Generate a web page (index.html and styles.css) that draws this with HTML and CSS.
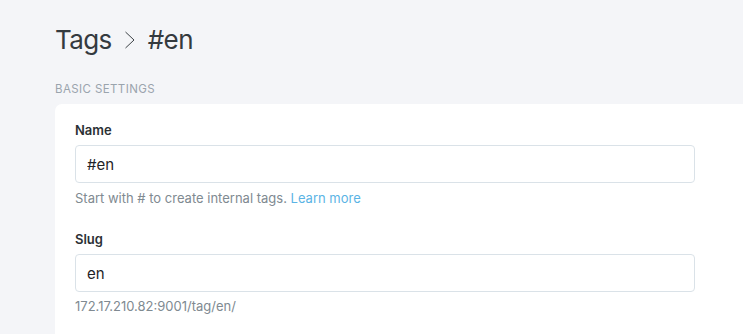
FILE: index.html
```html
<!DOCTYPE html>
<html lang="en">
<head>
    <meta charset="UTF-8">
    <title>Tags - #en</title>
    <link rel="stylesheet" href="styles.css">
</head>
<body>
    <div class="canvas">
        <h2 class="canvas-title">
            <span>Tags</span>
            <svg class="crumb-arrow" viewBox="0 0 12 18" width="12" height="18">
                <path d="M1.5 1 L10 9 L1.5 17" fill="none" stroke="#3c4246" stroke-width="1"/>
            </svg>
            <span>#en</span>
        </h2>

        <p class="section-title">Basic settings</p>

        <div class="main-settings">
            <div class="form-group">
                <label for="tag-name">Name</label>
                <input type="text" id="tag-name" value="#en">
                <p class="hint">Start with # to create internal tags. <a href="#">Learn more</a></p>
            </div>
            <div class="form-group">
                <label for="tag-slug">Slug</label>
                <input type="text" id="tag-slug" value="en">
                <p class="hint url">172.17.210.82:9001/tag/en/</p>
            </div>
        </div>
    </div>
</body>
</html>
```

FILE: styles.css
```css
html, body {
    height: 100%;
}

body {
    margin: 0;
    padding: 0;
    background-color: #f4f5f8;
    font-family: Inter, "Noto Sans", sans-serif;
    color: #15171a;
    overflow: hidden;
}

.canvas {
    display: flex;
    flex-direction: column;
    height: 100%;
    box-sizing: border-box;
    padding: 20px 0 0 55px;
}

.canvas-title {
    display: flex;
    flex-shrink: 0;
    align-items: center;
    gap: 12px;
    margin: 0;
    height: 38px;
    font-size: 26px;
    font-weight: 400;
    color: #343a3f;
    letter-spacing: -0.6px;
}

.crumb-arrow {
    margin-top: 1px;
}

.section-title {
    flex-shrink: 0;
    margin: 24px 0 8px;
    font-size: 11.5px;
    line-height: 14px;
    text-transform: uppercase;
    letter-spacing: 0.4px;
    color: #9aa4ad;
}

.main-settings {
    flex: 1;
    min-height: 0;
    overflow: hidden;
    background-color: #fff;
    border-radius: 7px 0 0 0;
    padding: 17px 20px 0;
}

.form-group {
    margin-bottom: 24px;
    width: 620px;
}

.form-group label {
    display: block;
    font-size: 13px;
    font-weight: 600;
    line-height: 18px;
    margin-bottom: 6px;
    color: #2b3034;
}

.form-group input[type="text"] {
    display: block;
    width: 100%;
    height: 38px;
    padding: 0 11px;
    border: 1px solid #dae2e8;
    border-radius: 4px;
    box-sizing: border-box;
    font-family: Inter, "Noto Sans", sans-serif;
    font-size: 15px;
    color: #1f2327;
    background: #fff;
    outline: none;
}

.hint {
    margin: 7px 0 0;
    font-size: 13px;
    line-height: 16px;
    color: #808a91;
}

.hint a {
    color: #5bb4e5;
    text-decoration: none;
}

.hint.url {
    margin-top: 6px;
}
```
